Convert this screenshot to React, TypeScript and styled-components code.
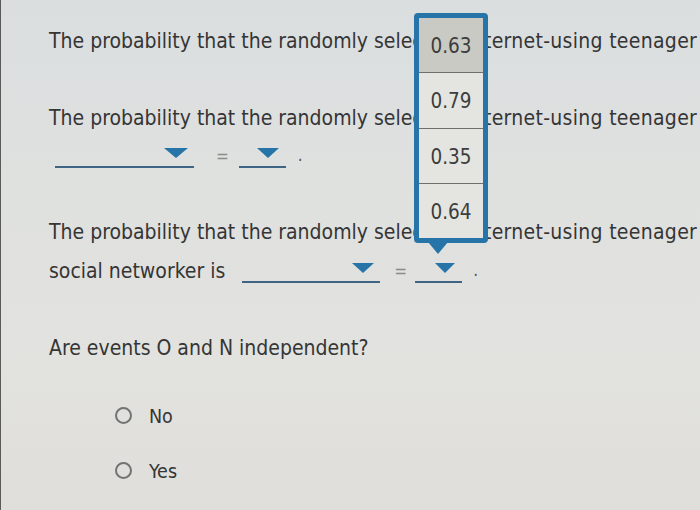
import React from "react";
import styled, { createGlobalStyle } from "styled-components";

const GlobalStyle = createGlobalStyle`
  html, body { margin: 0; padding: 0; }
  body {
    width: 700px;
    height: 510px;
    overflow: hidden;
    background: #e0e1de;
  }
`;

const FONT = `"DejaVu Sans Condensed", "DejaVu Sans", Tahoma, sans-serif`;
const BLUE = "#2674a8";

const Page = styled.div`
  position: relative;
  box-sizing: border-box;
  width: 700px;
  height: 510px;
  overflow: hidden;
  padding: 26px 0 0 48px;
  border-left: 1px solid #5a5a58;
  background: linear-gradient(180deg, #dadedf 0%, #dfe1df 35%, #e2e2df 70%, #dfdeda 100%);
  font-family: ${FONT};
  color: #353535;
`;

const Line = styled.div<{ $mt?: number }>`
  margin-top: ${(p) => p.$mt ?? 0}px;
  height: 30px;
  line-height: 30px;
  font-size: 21px;
  white-space: nowrap;
`;

/* the part of the sentence that lies under the open list */
const Covered = styled.span`
  letter-spacing: 1px;
`;

const Tail = styled.span`
  letter-spacing: 0.3px;
`;

const Row = styled.div<{ $mt?: number }>`
  margin-top: ${(p) => p.$mt ?? 0}px;
  display: flex;
  align-items: flex-end;
  height: 30px;
  font-size: 21px;
  white-space: nowrap;
`;

const RowText = styled.span`
  line-height: 30px;
`;

const Dropdown = styled.div<{ $w: number; $ml: number; $pr: number }>`
  box-sizing: border-box;
  width: ${(p) => p.$w}px;
  height: 20.5px;
  margin-left: ${(p) => p.$ml}px;
  margin-bottom: 2.7px;
  padding-right: ${(p) => p.$pr}px;
  display: flex;
  justify-content: flex-end;
  align-items: flex-start;
  border-bottom: 2.5px solid #3e6584;
`;

const Caret = styled.span<{ $w?: number }>`
  width: 0;
  height: 0;
  border-left: ${(p) => (p.$w ?? 22) / 2}px solid transparent;
  border-right: ${(p) => (p.$w ?? 22) / 2}px solid transparent;
  border-top: 10px solid ${BLUE};
`;

const Equals = styled.span<{ $ml: number }>`
  margin-left: ${(p) => p.$ml}px;
  margin-bottom: 5px;
  font-size: 17px;
  line-height: 20px;
  color: #8c8c8a;
`;

const Dot = styled.span<{ $ml: number }>`
  margin-left: ${(p) => p.$ml}px;
  margin-bottom: 6px;
  font-size: 17px;
  line-height: 20px;
  color: #555;
`;

const RadioRow = styled.label<{ $mt: number }>`
  margin-top: ${(p) => p.$mt}px;
  padding-left: 66px;
  display: flex;
  align-items: center;
  height: 30px;
  font-size: 19.5px;
`;

const Circle = styled.span`
  box-sizing: border-box;
  width: 17px;
  height: 17px;
  border-radius: 50%;
  border: 2px solid #737372;
  margin-right: 17px;
  margin-top: -2px;
`;

const Popup = styled.div`
  position: absolute;
  left: 413px;
  top: 13px;
  box-sizing: border-box;
  width: 74px;
  height: 230px;
  border: 5px solid ${BLUE};
  border-radius: 4px;
  background: #e4e5e1;
  display: flex;
  flex-direction: column;
  font-family: ${FONT};
`;

const Option = styled.div<{ $active?: boolean; $last?: boolean }>`
  flex: 1;
  display: flex;
  align-items: center;
  justify-content: center;
  font-size: 20.5px;
  color: #3d3d3d;
  background: ${(p) => (p.$active ? "#c9cac3" : "transparent")};
  border-bottom: ${(p) => (p.$last ? "none" : "1.5px solid #6f706e")};
  padding-top: 2px;
`;

const Pointer = styled.div`
  position: absolute;
  left: 427px;
  top: 242px;
  width: 0;
  height: 0;
  border-left: 10px solid transparent;
  border-right: 10px solid transparent;
  border-top: 12px solid ${BLUE};
`;

const options = ["0.63", "0.79", "0.35", "0.64"];

function Sentence() {
  return (
    <>
      The probability that the randomly sele<Covered>cted in</Covered>
      <Tail>ternet-using teenager</Tail>
    </>
  );
}

export default function App() {
  return (
    <>
      <GlobalStyle />
      <Page>
        <Line>
          <Sentence />
        </Line>
        <Line $mt={47}>
          <Sentence />
        </Line>
        <Row $mt={8}>
          <Dropdown $w={139} $ml={6} $pr={6}>
            <Caret $w={24} />
          </Dropdown>
          <Equals $ml={22}>=</Equals>
          <Dropdown $w={47} $ml={10} $pr={7}>
            <Caret $w={23} />
          </Dropdown>
          <Dot $ml={12}>.</Dot>
        </Row>
        <Line $mt={46}>
          <Sentence />
        </Line>
        <Row $mt={9}>
          <RowText>social networker is</RowText>
          <Dropdown $w={138} $ml={17} $pr={6}>
            <Caret $w={22} />
          </Dropdown>
          <Equals $ml={14}>=</Equals>
          <Dropdown $w={47} $ml={8} $pr={7}>
            <Caret $w={21} />
          </Dropdown>
          <Dot $ml={11}>.</Dot>
        </Row>
        <Line $mt={47}>Are events O and N independent?</Line>
        <RadioRow $mt={38}>
          <Circle />
          No
        </RadioRow>
        <RadioRow $mt={25}>
          <Circle />
          Yes
        </RadioRow>
        <Popup>
          {options.map((o, i) => (
            <Option key={o} $active={i === 0} $last={i === options.length - 1}>
              {o}
            </Option>
          ))}
        </Popup>
        <Pointer />
      </Page>
    </>
  );
}
